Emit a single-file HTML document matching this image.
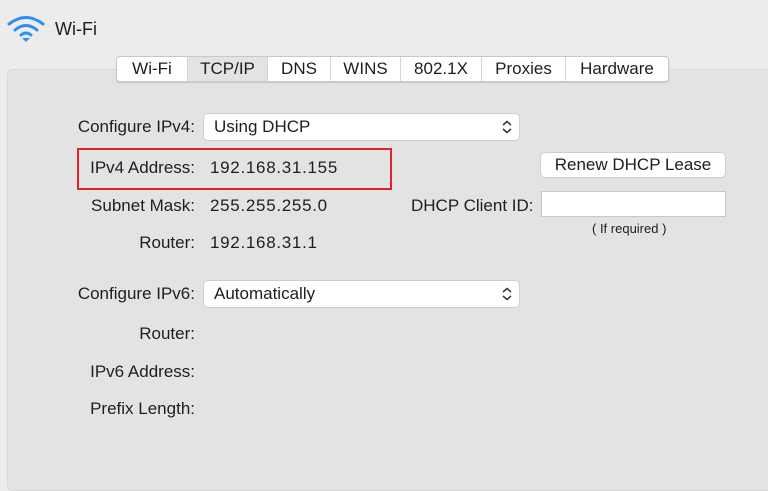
<!DOCTYPE html><html><head><style>
body{margin:0;width:768px;height:462px;background:#ececec;font-family:"Liberation Sans",sans-serif;color:#1e1e1e;position:relative;overflow:hidden;font-size:17px}
.a{position:absolute;white-space:nowrap}
.panel{position:absolute;left:7px;top:69px;width:780px;height:420px;background:#e3e3e3;border:1px solid #d8d8d8;border-radius:5px}
.tabs{position:absolute;left:116px;top:56px;height:24px;display:flex;background:#fff;border:1px solid #c8c8c8;border-radius:4px;box-shadow:0 1px 1px rgba(0,0,0,.12);overflow:hidden}
.tabs div{height:24px;line-height:24px;text-align:center;border-left:1px solid #d6d6d6;box-sizing:border-box}
.tabs div:first-child{border-left:none}
.lbl{position:absolute;right:573px;white-space:nowrap;line-height:18px}
.val{position:absolute;left:210px;line-height:18px;letter-spacing:0.7px}
.pop{position:absolute;left:204px;width:315px;height:26px;background:#fff;border-radius:4px;box-shadow:0 0 0 1px #cfcfcf,0 1px 1px rgba(0,0,0,.1);line-height:26px;box-sizing:border-box;padding-left:10px}
.pop svg{position:absolute;right:6px;top:6px}
</style></head><body>
<svg class="a" style="left:6px;top:14px" width="40" height="30" viewBox="0 0 40 30"><g fill="none" stroke="#2d8ef0" stroke-width="3" stroke-linecap="round"><path d="M3 10 Q20 -3 37 10"/><path d="M9 16 Q20 7 31 16"/><path d="M15 21 Q20 17 25 21"/></g><path d="M16 24 L24 24 L20 28Z" fill="#2d8ef0"/></svg>
<div class="a" style="left:55px;top:19px;font-size:18px">Wi-Fi</div>
<div class="panel"></div>
<div class="tabs">
<div style="width:70px">Wi-Fi</div><div style="width:80px;background:#e3e3e3">TCP/IP</div><div style="width:63px">DNS</div><div style="width:70px">WINS</div><div style="width:81px">802.1X</div><div style="width:84px">Proxies</div><div style="width:103px">Hardware</div>
</div>
<div class="lbl" style="top:118px">Configure IPv4:</div>
<div class="pop" style="top:114px">Using DHCP<svg width="12" height="14" viewBox="0 0 12 14"><path d="M2 5 L6 1.5 L10 5 M2 9 L6 12.5 L10 9" fill="none" stroke="#333" stroke-width="1.5"/></svg></div>
<div class="a" style="left:77px;top:148px;width:311px;height:38px;border:2px solid #e5202a"></div>
<div class="lbl" style="top:159px">IPv4 Address:</div><div class="val" style="top:159px">192.168.31.155</div>
<div class="lbl" style="top:197px">Subnet Mask:</div><div class="val" style="top:197px">255.255.255.0</div>
<div class="lbl" style="top:234px">Router:</div><div class="val" style="top:234px">192.168.31.1</div>
<div class="a" style="left:541px;top:153px;width:184px;height:24px;background:#fff;border-radius:4px;box-shadow:0 0 0 1px #cfcfcf,0 1px 1px rgba(0,0,0,.1);text-align:center;line-height:24px">Renew DHCP Lease</div>
<div class="a" style="left:411px;top:197px;line-height:18px">DHCP Client ID:</div>
<div class="a" style="left:541px;top:191px;width:183px;height:24px;background:#fff;border:1px solid #c8c8c8"></div>
<div class="a" style="left:592px;top:221px;font-size:13px">( If required )</div>
<div class="lbl" style="top:285px">Configure IPv6:</div>
<div class="pop" style="top:281px">Automatically<svg width="12" height="14" viewBox="0 0 12 14"><path d="M2 5 L6 1.5 L10 5 M2 9 L6 12.5 L10 9" fill="none" stroke="#333" stroke-width="1.5"/></svg></div>
<div class="lbl" style="top:325px">Router:</div>
<div class="lbl" style="top:363px">IPv6 Address:</div>
<div class="lbl" style="top:400px">Prefix Length:</div>
</body></html>
